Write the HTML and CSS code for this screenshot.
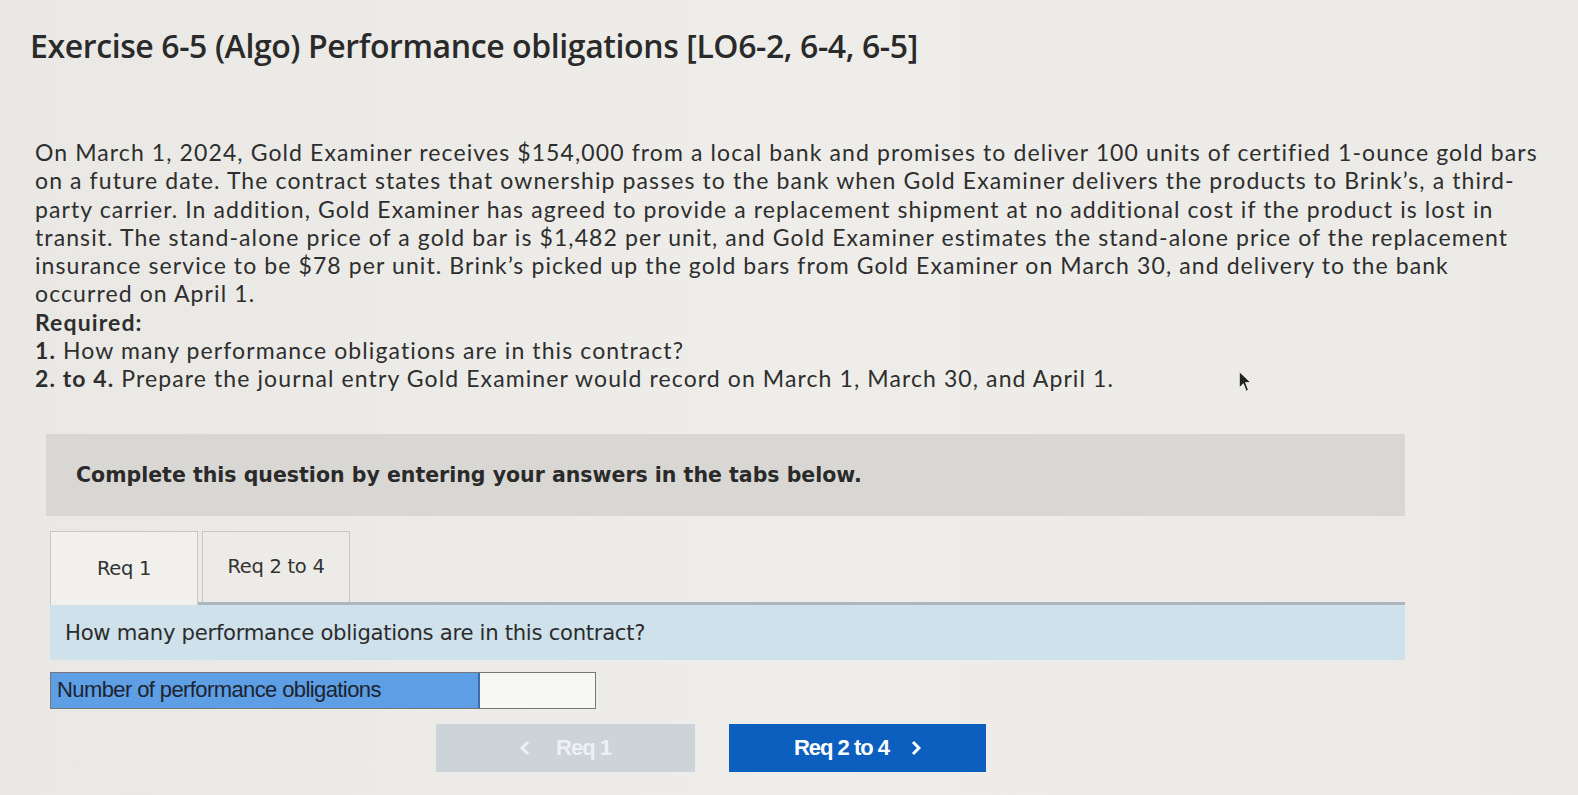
FILE: index.html
```html
<!DOCTYPE html>
<html>
<head>
<meta charset="utf-8">
<link rel="stylesheet" href="styles.css">
</head>
<body>
<div class="page">
  <h1 class="title">Exercise 6-5 (Algo) Performance obligations [LO6-2, 6-4, 6-5]</h1>
  <div class="problem">
    <p class="para">On March 1, 2024, Gold Examiner receives $154,000 from a local bank and promises to deliver 100 units of certified 1-ounce gold bars<br>on a future date. The contract states that ownership passes to the bank when Gold Examiner delivers the products to Brink’s, a third-<br>party carrier. In addition, Gold Examiner has agreed to provide a replacement shipment at no additional cost if the product is lost in<br>transit. The stand-alone price of a gold bar is $1,482 per unit, and Gold Examiner estimates the stand-alone price of the replacement<br>insurance service to be $78 per unit. Brink’s picked up the gold bars from Gold Examiner on March 30, and delivery to the bank<br>occurred on April 1.</p>
    <p class="req-head">Required:</p>
    <p class="req"><b>1.</b> How many performance obligations are in this contract?</p>
    <p class="req"><b>2. to 4.</b> Prepare the journal entry Gold Examiner would record on March 1, March 30, and April 1.</p>
  </div>
  <div class="answer">
    <div class="instructions">Complete this question by entering your answers in the tabs below.</div>
    <div class="work">
      <div class="tabs">
        <div class="tab active">Req 1</div>
        <div class="tab">Req 2 to 4</div>
      </div>
      <div class="question">How many performance obligations are in this contract?</div>
      <div class="input-row">
        <div class="input-label">Number of performance obligations</div>
        <div class="input-box"></div>
      </div>
      <div class="nav">
        <div class="btn prev"><svg class="chev-l" width="10" height="16" viewBox="0 0 10 16"><polyline points="8,2 2,8 8,14" fill="none" stroke="currentColor" stroke-width="3"/></svg><span>Req 1</span></div>
        <div class="btn next"><span>Req 2 to 4</span><svg class="chev-r" width="10" height="16" viewBox="0 0 10 16"><polyline points="2,2 8,8 2,14" fill="none" stroke="currentColor" stroke-width="3"/></svg></div>
      </div>
    </div>
  </div>
  <svg class="cursor" width="16" height="24" viewBox="0 0 14 20"><path d="M2 1 L2 15 L5.5 11.5 L8 18 L10 17 L7.5 10.5 L12 10.5 Z" fill="#222" stroke="#eee" stroke-width="0.8"/></svg>
</div>
</body>
</html>
```

FILE: styles.css
```css
html, body {
  margin: 0;
  padding: 0;
}
body {
  background: linear-gradient(90deg, #e9e8e4 0%, #eeede9 50%, #ebeae6 100%);
  color: #2b2b2b;
  font-family: "Open Sans", "Liberation Sans", sans-serif;
  width: 1578px;
  height: 795px;
  overflow: hidden;
}
.page {
  position: relative;
  padding: 28px 0 0 30px;
}
.title {
  margin: 0;
  font-size: 32px;
  font-weight: 600;
  line-height: 36px;
  color: #2a2a2a;
  letter-spacing: -0.4px;
}
.problem {
  margin-top: 74px;
  padding-left: 5px;
  font-family: Lato, "Open Sans", sans-serif;
  font-size: 23px;
  line-height: 28.3px;
  letter-spacing: 1.1px;
  color: #2e2e2e;
}
.problem p {
  margin: 0;
  white-space: nowrap;
}
.req-head {
  font-weight: 700;
}
.req b {
  font-weight: 700;
}
.answer {
  margin-top: 41px;
  padding-left: 16px;
  width: 1359px;
}
.instructions {
  background: #d9d7d4;
  height: 82px;
  display: flex;
  align-items: center;
  padding-left: 30px;
  font-family: "DejaVu Sans", Verdana, sans-serif;
  font-weight: 700;
  font-size: 20.5px;
  color: #2a2a2a;
}
.work {
  padding-left: 4px;
}
.tabs {
  display: flex;
  gap: 4px;
  margin-top: 15px;
  height: 71px;
}
.tab {
  width: 146px;
  display: flex;
  align-items: center;
  justify-content: center;
  border: 1px solid #c9c8c5;
  border-bottom: none;
  background: #ecebe8;
  font-family: "DejaVu Sans", Verdana, sans-serif;
  font-size: 19.5px;
  letter-spacing: -0.3px;
  color: #333;
}
.tab.active {
  background: #f1f0ed;
  height: 73px;
  position: relative;
  z-index: 1;
}
.question {
  background: #cfe1eb;
  border-top: 3px solid #aeb7bd;
  height: 55px;
  display: flex;
  align-items: center;
  padding-left: 15px;
  font-family: "DejaVu Sans", Verdana, sans-serif;
  font-size: 21.2px;
  letter-spacing: -0.3px;
  color: #2c2c2c;
}
.input-row {
  display: flex;
  margin-top: 12px;
  height: 37px;
  width: 546px;
  border: 1px solid #777;
  box-sizing: border-box;
}
.input-label {
  width: 421px;
  background: #5d9ee4;
  display: flex;
  align-items: center;
  padding-left: 6px;
  font-family: "Liberation Sans", Arial, sans-serif;
  font-size: 22px;
  letter-spacing: -0.6px;
  color: #1d2430;
}
.input-box {
  flex: 1;
  background: #f7f7f5;
  border-left: 2px solid #3b6ea8;
}
.nav {
  display: flex;
  gap: 34px;
  margin-top: 15px;
  padding-left: 386px;
}
.btn {
  width: 259px;
  height: 48px;
  display: flex;
  align-items: center;
  justify-content: center;
  font-family: "Liberation Sans", Arial, sans-serif;
  font-weight: 700;
  font-size: 22px;
  letter-spacing: -1px;
}
.btn.prev {
  background: #ccd3d9;
  color: #eef1f4;
}
.btn.next {
  width: 257px;
  background: #0d5fbf;
  color: #ffffff;
}
.chev-l {
  margin-right: 26px;
}
.chev-r {
  margin-left: 22px;
}
.cursor {
  position: absolute;
  left: 1237px;
  top: 370px;
}
```
